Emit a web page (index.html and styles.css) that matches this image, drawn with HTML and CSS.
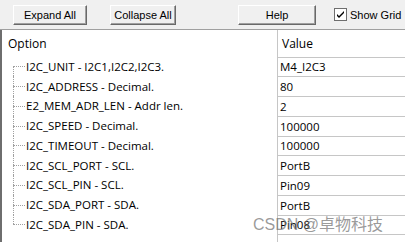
FILE: index.html
```html
<!DOCTYPE html>
<html>
    <head>
        <meta charset="utf-8">
        <title>I2C options</title>

        <link rel="stylesheet" href="styles.css">
    </head>

    <body>

        <div class="toolbar">
            <button class="btn btn-expand">Expand All</button>
            <button class="btn btn-collapse">Collapse All</button>
            <button class="btn btn-help">Help</button>

            <label class="show-grid">
                <span class="check">
                    <svg width="13" height="13" viewBox="0 0 13 13">
                        <rect x="0.5" y="0.5" width="12" height="12" fill="#fff" stroke="#6e6e6e"/>
                        <path d="M3 6 L5 8 L10 3 L10 5 L5 10 L3 8 Z" fill="#000"/>
                    </svg>
                </span>
                Show Grid
            </label>
        </div>

        <div class="grid">
            <div class="head">Option</div>
            <div class="head value-head">Value</div>

            <div class="opt first">I2C_UNIT - I2C1,I2C2,I2C3.</div>
            <div class="val">M4_I2C3</div>

            <div class="opt">I2C_ADDRESS - Decimal.</div>
            <div class="val">80</div>

            <div class="opt">E2_MEM_ADR_LEN - Addr len.</div>
            <div class="val">2</div>

            <div class="opt">I2C_SPEED - Decimal.</div>
            <div class="val">100000</div>

            <div class="opt">I2C_TIMEOUT - Decimal.</div>
            <div class="val">100000</div>

            <div class="opt">I2C_SCL_PORT - SCL.</div>
            <div class="val">PortB</div>

            <div class="opt">I2C_SCL_PIN - SCL.</div>
            <div class="val">Pin09</div>

            <div class="opt">I2C_SDA_PORT - SDA.</div>
            <div class="val">PortB</div>

            <div class="opt last">I2C_SDA_PIN - SDA.</div>
            <div class="val">Pin08</div>

            <div class="opt empty"></div>
            <div class="val"></div>
        </div>

        <div class="watermark">CSDN @卓物科技</div>

    </body>
</html>
```

FILE: styles.css
```css
/* Page */

body {
    margin: 0;
    background: #fff;
    font-family: "Open Sans", "Noto Sans", sans-serif;
    font-size: 11.5px;
    color: #000;
    overflow: hidden;
}

/* Toolbar */

.toolbar {
    display: flex;
    align-items: center;
    height: 29px;
    padding-left: 13px;
    background: #f0f0f0;
    border-bottom: 1px solid #a0a0a0;
}

.btn {
    height: 20px;
    padding: 0;
    margin: 0;
    font-family: "Liberation Sans", Arial, sans-serif;
    font-size: 11px;
    color: #000;
    background: #f0f0f0;
    border: 1px solid;
    border-color: #fff #696969 #696969 #fff;
    box-shadow: inset -1px -1px #a0a0a0;
}

.btn-expand {
    width: 74px;
}

.btn-collapse {
    width: 66px;
    margin-left: 23px;
}

.btn-help {
    width: 78px;
    margin-left: 62px;
}

.show-grid {
    display: flex;
    align-items: center;
    gap: 3px;
    margin-left: 18px;
    font-family: "Liberation Sans", Arial, sans-serif;
    font-size: 11px;
}

.check {
    display: flex;
}

/* Option / value grid */

.grid {
    display: grid;
    grid-template-columns: 275px 1fr;
    grid-template-rows: 26.5px;
    grid-auto-rows: 19.75px;
    border-left: 2px solid #6e6e6e;
}

.head {
    display: flex;
    align-items: center;
    padding-left: 6px;
    font-size: 12px;
}

.value-head {
    padding-left: 4px;
    border-left: 1px solid #c6c6c6;
}

.opt {
    position: relative;
    display: flex;
    align-items: center;
    padding-left: 24px;
    white-space: nowrap;
}

/* dotted tree lines */
.opt::before {
    content: "";
    position: absolute;
    left: 11px;
    top: 50%;
    width: 12px;
    border-top: 1px dotted #a0a0a0;
}

.opt::after {
    content: "";
    position: absolute;
    left: 11px;
    top: 0;
    bottom: 0;
    border-left: 1px dotted #a0a0a0;
}

.opt.first::after {
    top: 50%;
}

.opt.last::after {
    bottom: 50%;
}

.opt.empty::before,
.opt.empty::after {
    display: none;
}

.val {
    box-sizing: border-box;
    display: flex;
    align-items: center;
    padding-left: 2px;
    border-left: 1px solid #c6c6c6;
    border-top: 1px solid #c6c6c6;
}

/* Watermark over the grid */

.watermark {
    position: absolute;
    left: 253px;
    top: 211px;
    font-family: "Liberation Sans", "Noto Sans CJK SC", sans-serif;
    font-size: 16px;
    color: rgba(110, 110, 110, 0.7);
}
```
